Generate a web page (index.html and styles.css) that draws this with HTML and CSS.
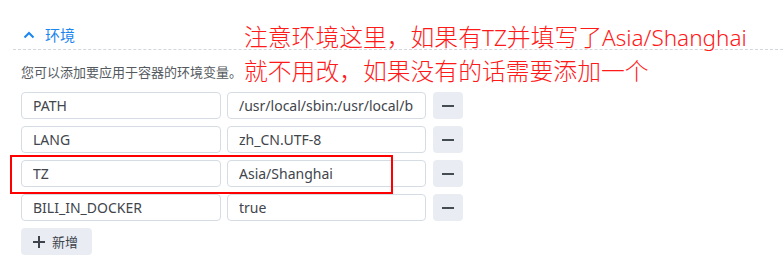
FILE: index.html
```html
<!DOCTYPE html>
<html>
<head>
<meta charset="utf-8">
<link rel="stylesheet" href="styles.css">
</head>
<body>
<div class="panel">
  <div class="header">
    <svg class="chev" width="12" height="8" viewBox="0 0 12 8"><path d="M1.5 6.5 L6 2 L10.5 6.5" fill="none" stroke="#1a86ee" stroke-width="2"/></svg>
    <span class="title">环境</span>
  </div>
  <div class="body">
    <div class="desc">您可以添加要应用于容器的环境变量。</div>
    <div class="rows">
      <div class="row">
        <div class="field k"><span class="txt">PATH</span></div>
        <div class="field v"><span class="txt">/usr/local/sbin:/usr/local/bin:/usr/sbin:/usr/bin</span></div>
        <div class="minus"><span class="bar"></span></div>
      </div>
      <div class="row">
        <div class="field k"><span class="txt">LANG</span></div>
        <div class="field v"><span class="txt">zh_CN.UTF-8</span></div>
        <div class="minus"><span class="bar"></span></div>
      </div>
      <div class="row">
        <div class="field k"><span class="txt">TZ</span></div>
        <div class="field v"><span class="txt">Asia/Shanghai</span></div>
        <div class="minus"><span class="bar"></span></div>
      </div>
      <div class="row">
        <div class="field k"><span class="txt">BILI_IN_DOCKER</span></div>
        <div class="field v"><span class="txt">true</span></div>
        <div class="minus"><span class="bar"></span></div>
      </div>
      <div class="addrow">
        <div class="add">
          <svg width="12" height="12" viewBox="0 0 12 12"><path d="M6 0 V12 M0 6 H12" stroke="#3d434b" stroke-width="2"/></svg>
          <span>新增</span>
        </div>
      </div>
    </div>
  </div>
</div>
<div class="note">注意环境这里，如果有<span class="lat">TZ</span>并填写了<span class="lat">Asia/Shanghai</span><br>就不用改，如果没有的话需要添加一个</div>
<div class="redbox"></div>
</body>
</html>
```

FILE: styles.css
```css
html, body {
  margin: 0;
  padding: 0;
  background: #ffffff;
  width: 783px;
  height: 274px;
  overflow: hidden;
  font-family: "Noto Sans", "Noto Sans CJK SC", sans-serif;
}
.panel {
  padding-left: 13px;
}
.header {
  display: flex;
  align-items: center;
  padding: 25px 0 4px 10px;
  height: 20px;
  border-bottom: 1px dashed #d3d7dc;
}
.chev {
  display: block;
  margin-right: 10px;
}
.title {
  font-family: "Noto Sans CJK SC", sans-serif;
  font-size: 15px;
  line-height: 20px;
  color: #1a86ee;
}
.body {
  padding-left: 8px;
}
.desc {
  margin-top: 13px;
  font-family: "Noto Sans CJK SC", sans-serif;
  font-size: 13px;
  line-height: 18px;
  color: #555a60;
}
.rows {
  margin-top: 11px;
  display: flex;
  flex-direction: column;
  gap: 7px;
}
.row {
  display: flex;
  height: 27px;
}
.field {
  box-sizing: border-box;
  height: 27px;
  border: 1px solid #d6dce4;
  border-radius: 4px;
  padding: 0 12px 0 11px;
  display: flex;
  align-items: center;
  font-size: 14px;
  color: #41454c;
  background: #fff;
}
.field.k {
  width: 200px;
  margin-right: 6px;
}
.field.v {
  width: 199px;
  margin-right: 7px;
}
.txt {
  display: block;
  overflow: hidden;
  white-space: nowrap;
  width: 100%;
  line-height: 25px;
}
.minus {
  width: 30px;
  height: 27px;
  border-radius: 4px;
  background: #e9edf3;
  display: flex;
  align-items: center;
  justify-content: center;
}
.bar {
  display: block;
  width: 12px;
  height: 2px;
  background: #454b53;
}
.addrow {
  display: flex;
}
.add {
  width: 71px;
  height: 27px;
  border-radius: 4px;
  background: #e9edf3;
  display: flex;
  align-items: center;
  box-sizing: border-box;
  padding-left: 12px;
  gap: 7px;
  font-family: "Noto Sans CJK SC", sans-serif;
  font-size: 13px;
  color: #3d434b;
}
.add svg {
  display: block;
}
.note {
  position: absolute;
  left: 244px;
  top: 20px;
  font-family: "Noto Sans CJK SC", sans-serif;
  font-size: 23.8px;
  font-weight: 300;
  line-height: 32px;
  color: #ff1a1a;
  white-space: nowrap;
}
.lat {
  font-family: "Noto Sans", sans-serif;
  font-size: 22.5px;
  font-weight: 300;
}
.redbox {
  position: absolute;
  left: 10px;
  top: 155px;
  width: 383px;
  height: 39px;
  box-sizing: border-box;
  border: 2px solid #ff0000;
}
```
